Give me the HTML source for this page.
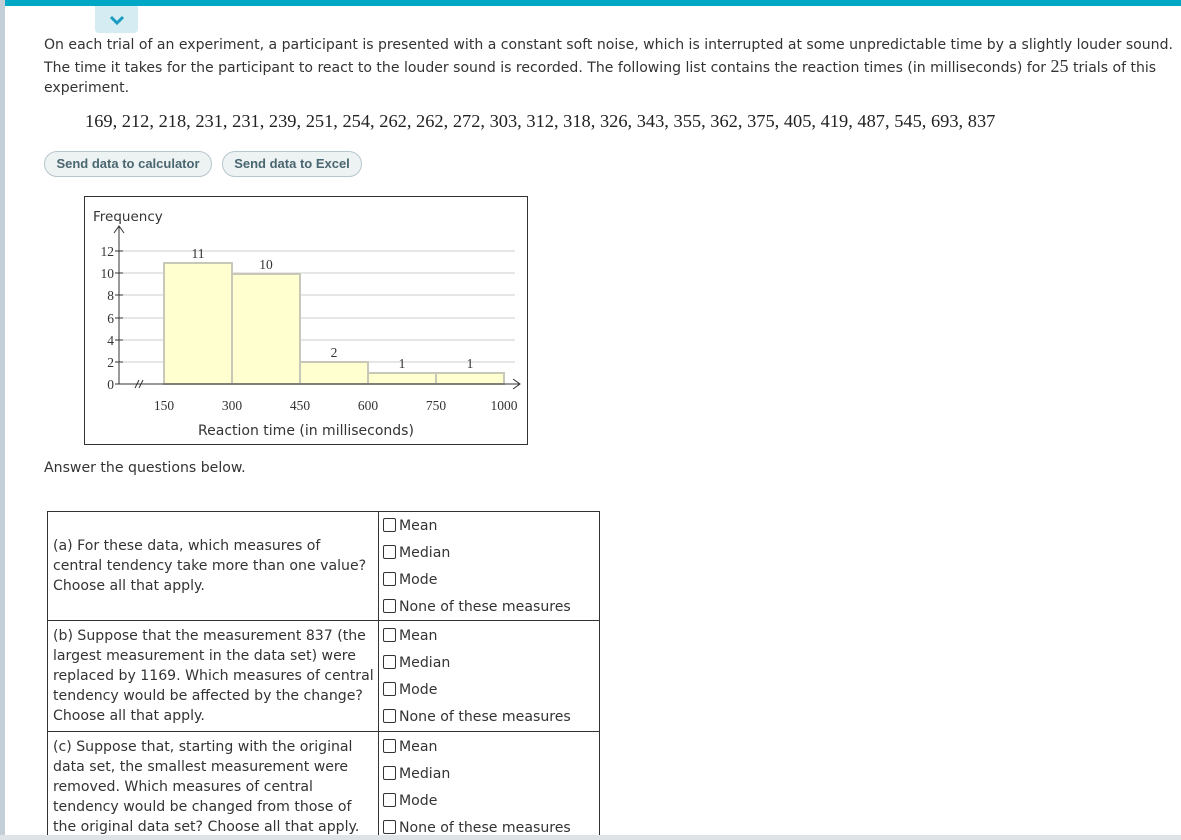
<!DOCTYPE html>
<html style="width:1181px;height:840px;overflow:hidden"><head><meta charset="utf-8"><style>
body{margin:0;width:1181px;height:840px;position:relative;overflow:hidden;background:#fff;font-family:"DejaVu Sans","Liberation Sans",sans-serif;font-size:14px;color:#333}
.a{position:absolute}
.btn{position:absolute;top:151px;height:24px;border:1px solid #b5c7cc;border-radius:13px;background:#edf2f3;color:#4a6670;font-family:"Liberation Sans",sans-serif;font-weight:bold;font-size:13px;line-height:24px;text-align:center}
.q{position:absolute;left:53px;width:325px;line-height:20px;font-size:14.1px}
.opt{position:absolute;left:383px;font-size:14.1px;line-height:16px}
.opt:before{content:"";display:inline-block;width:11px;height:12px;border:1px solid #333;border-radius:2px;margin-right:3px;vertical-align:-2px}
</style></head><body>
<div class="a" style="left:0;top:0;width:1181px;height:6px;background:#00a8c6"></div>
<div class="a" style="left:0;top:0;width:5px;height:840px;background:#c3ced6"></div>
<div class="a" style="left:95px;top:6px;width:43px;height:27px;background:#d4ecf2;border-radius:0 0 4px 4px"></div>
<svg class="a" style="left:108px;top:14px" width="18" height="12"><path d="M3 3 L9 9 L15 3" stroke="#1a9cc0" stroke-width="3" fill="none"/></svg>
<div class="a" style="left:44px;top:35px;width:1140px;line-height:20.5px;font-size:14.05px">On each trial of an experiment, a participant is presented with a constant soft noise, which is interrupted at some unpredictable time by a slightly louder sound.<br>The time it takes for the participant to react to the louder sound is recorded. The following list contains the reaction times (in milliseconds) for <span style="font-family:'Liberation Serif',serif;font-size:18px">25</span> trials of this<br>experiment.</div>
<div class="a" style="left:85px;top:111px;font-family:'Liberation Serif',serif;font-size:18.4px;color:#222">169, 212, 218, 231, 231, 239, 251, 254, 262, 262, 272, 303, 312, 318, 326, 343, 355, 362, 375, 405, 419, 487, 545, 693, 837</div>
<div class="btn" style="left:44px;width:166px">Send data to calculator</div>
<div class="btn" style="left:222px;width:138px">Send data to Excel</div>
<svg class="a" style="left:84px;top:196px" width="445" height="250" font-family="Liberation Serif,serif" font-size="13.5" fill="#333">
<rect x="0.5" y="0.5" width="443" height="248" fill="#fff" stroke="#333"/>
<text x="9" y="25" font-family="DejaVu Sans,sans-serif" font-size="13.5">Frequency</text>
<g stroke="#ccc"><line x1="35" y1="55" x2="431" y2="55"/><line x1="35" y1="77" x2="431" y2="77"/><line x1="35" y1="99" x2="431" y2="99"/><line x1="35" y1="122" x2="431" y2="122"/><line x1="35" y1="144" x2="431" y2="144"/><line x1="35" y1="166" x2="431" y2="166"/></g>
<g fill="#ffffd0" stroke="#c8c8b8" stroke-width="2"><rect x="80" y="67" width="68" height="121"/><rect x="148" y="78" width="68" height="110"/><rect x="216" y="166" width="68" height="22"/><rect x="284" y="177" width="68" height="11"/><rect x="352" y="177" width="68" height="11"/></g>
<g stroke="#333" fill="none"><line x1="35" y1="188" x2="35" y2="30"/><path d="M30 37 L35 30 L40 37"/><line x1="35" y1="188" x2="436" y2="188"/><path d="M429 183 L436 188 L429 193"/><path d="M51 192 L55 184 M55 192 L59 184"/>
<line x1="31" y1="55" x2="39" y2="55"/><line x1="31" y1="77" x2="39" y2="77"/><line x1="31" y1="99" x2="39" y2="99"/><line x1="31" y1="122" x2="39" y2="122"/><line x1="31" y1="144" x2="39" y2="144"/><line x1="31" y1="166" x2="39" y2="166"/><line x1="31" y1="188" x2="39" y2="188"/></g>
<g text-anchor="end"><text x="30" y="60">12</text><text x="30" y="82">10</text><text x="30" y="104">8</text><text x="30" y="127">6</text><text x="30" y="149">4</text><text x="30" y="171">2</text><text x="30" y="193">0</text></g>
<g text-anchor="middle"><text x="114" y="62">11</text><text x="182" y="73">10</text><text x="250" y="161">2</text><text x="318" y="172">1</text><text x="386" y="172">1</text>
<text x="80" y="214">150</text><text x="148" y="214">300</text><text x="216" y="214">450</text><text x="284" y="214">600</text><text x="352" y="214">750</text><text x="420" y="214">1000</text>
<text x="222" y="239" font-family="DejaVu Sans,sans-serif" font-size="14">Reaction time (in milliseconds)</text></g>
</svg>
<div class="a" style="left:44px;top:460px;font-size:14.1px">Answer the questions below.</div>
<div class="a" style="left:47px;top:511px;width:551px;height:340px;border:1px solid #333"></div>
<div class="a" style="left:378px;top:511px;width:1px;height:330px;background:#333"></div>
<div class="a" style="left:47px;top:620px;width:552px;height:1px;background:#333"></div>
<div class="a" style="left:47px;top:731px;width:552px;height:1px;background:#333"></div>
<div class="q" style="top:536px;width:315px">(a) For these data, which measures of central tendency take more than one value? Choose all that apply.</div>
<div class="q" style="top:626px">(b) Suppose that the measurement 837 (the largest measurement in the data set) were replaced by 1169. Which measures of central tendency would be affected by the change? Choose all that apply.</div>
<div class="q" style="top:737px;width:312px">(c) Suppose that, starting with the original data set, the smallest measurement were removed. Which measures of central tendency would be changed from those of the original data set? Choose all that apply.</div>
<div class="opt" style="top:518px">Mean</div><div class="opt" style="top:545px">Median</div><div class="opt" style="top:572px">Mode</div><div class="opt" style="top:599px">None of these measures</div>
<div class="opt" style="top:628px">Mean</div><div class="opt" style="top:655px">Median</div><div class="opt" style="top:682px">Mode</div><div class="opt" style="top:709px">None of these measures</div>
<div class="opt" style="top:739px">Mean</div><div class="opt" style="top:766px">Median</div><div class="opt" style="top:793px">Mode</div><div class="opt" style="top:820px">None of these measures</div>
<div class="a" style="left:0;top:835px;width:1181px;height:5px;background:#dde3e6"></div>
</body></html>
